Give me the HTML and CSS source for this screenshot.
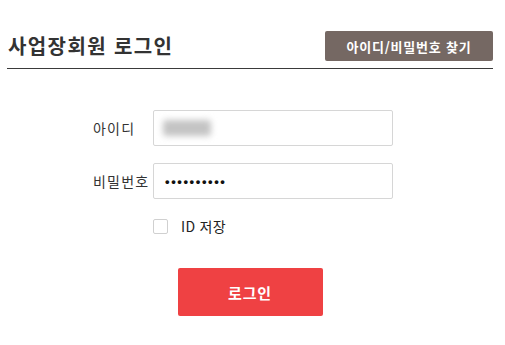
FILE: index.html
```html
<!DOCTYPE html>
<html lang="ko">
<head>
<meta charset="utf-8">
<title>사업장회원 로그인</title>
<link rel="stylesheet" href="styles.css">
</head>
<body>
<div class="page">
  <header class="head">
    <h1 class="title">사업장회원 로그인</h1>
    <a class="find-btn" href="#">아이디/비밀번호 찾기</a>
  </header>
  <form class="login-form">
    <div class="row">
      <label class="label">아이디</label>
      <div class="field"><span class="blurred"></span></div>
    </div>
    <div class="row">
      <label class="label">비밀번호</label>
      <div class="field"><span class="dots">••••••••••</span></div>
    </div>
    <div class="save-row">
      <span class="check"></span>
      <span class="save-text">ID 저장</span>
    </div>
    <div class="submit-wrap">
      <button type="button" class="submit">로그인</button>
    </div>
  </form>
</div>
</body>
</html>
```
FILE: styles.css
```css
html, body {
  margin: 0;
  padding: 0;
  background: #fff;
}
body {
  font-family: "Noto Sans CJK KR", "Noto Sans", sans-serif;
  color: #333;
}
.page {
  width: 486px;
  margin-left: 7px;
}
.head {
  display: flex;
  justify-content: space-between;
  align-items: flex-end;
  padding-top: 31px;
  padding-bottom: 7px;
  border-bottom: 1px solid #3a3a3a;
}
.title {
  margin: 0 0 0 1px;
  font-size: 20px;
  font-weight: 700;
  line-height: 30px;
  color: #333;
  letter-spacing: 1.4px;
}
.find-btn {
  display: flex;
  align-items: center;
  justify-content: center;
  width: 168px;
  height: 30px;
  background: #756863;
  color: #fff;
  font-size: 13px;
  font-weight: 700;
  letter-spacing: 0.8px;
  border-radius: 2px;
  text-decoration: none;
}
.login-form {
  padding-left: 86px;
  padding-top: 41px;
}
.row {
  display: flex;
  align-items: center;
  margin-bottom: 17px;
}
.label {
  width: 60px;
  font-size: 14px;
  letter-spacing: 1.2px;
  color: #333;
}
.field {
  box-sizing: border-box;
  width: 240px;
  height: 36px;
  border: 1px solid #d6d6d6;
  border-radius: 2px;
  display: flex;
  align-items: center;
  padding-left: 9px;
}
.blurred {
  display: block;
  width: 48px;
  height: 16px;
  background: #c4c4c4;
  filter: blur(3px);
  border-radius: 3px;
}
.dots {
  font-family: "Liberation Sans", sans-serif;
  font-size: 13px;
  font-weight: 700;
  letter-spacing: 1.6px;
  color: #111;
  padding-left: 2px;
}
.save-row {
  display: flex;
  align-items: center;
  padding-left: 60px;
  margin-top: 7px;
}
.check {
  box-sizing: border-box;
  width: 15px;
  height: 15px;
  border: 1px solid #d0d0d0;
  border-radius: 2px;
  background: #fff;
}
.save-text {
  margin-left: 13px;
  font-size: 14px;
  letter-spacing: 0.3px;
  color: #222;
}
.submit-wrap {
  margin-left: -86px;
  display: flex;
  justify-content: center;
  padding-top: 32px;
}
.submit {
  width: 145px;
  height: 48px;
  border: none;
  border-radius: 2px;
  background: #ef4143;
  color: #fff;
  font-family: "Noto Sans CJK KR", sans-serif;
  font-size: 15px;
  font-weight: 700;
  letter-spacing: 0.8px;
}
```
